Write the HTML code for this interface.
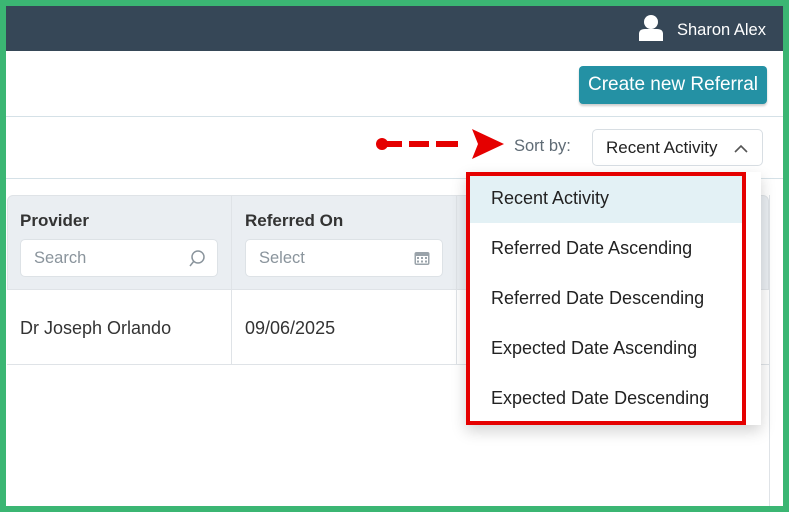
<!DOCTYPE html>
<html><head><style>
*{box-sizing:border-box;margin:0;padding:0}
body{width:789px;height:512px;overflow:hidden;background:#3bb673;font-family:"Liberation Sans",sans-serif;position:relative}
.page{position:absolute;left:6px;top:6px;width:777px;height:500px;background:#fff;overflow:hidden}
.hdr{position:absolute;left:0;top:0;width:777px;height:45px;background:#364757}
.abs{position:absolute}
</style></head><body>
<div class="page">
 <div class="hdr">
  <svg class="abs" style="left:632px;top:8px" width="26" height="28" viewBox="0 0 26 28"><circle cx="13" cy="8" r="7" fill="#fff"/><path d="M1 27 V20 Q1 15 7 15 H19 Q25 15 25 20 V27 Z" fill="#fff"/></svg>
  <div class="abs" style="left:671px;top:15px;color:#fff;font-size:16.5px">Sharon Alex</div>
 </div>
 <div class="abs" style="left:573px;top:60px;width:188px;height:38px;background:#2491a4;border-radius:4px;box-shadow:0 2px 2px rgba(0,0,0,.2);color:#fff;font-size:19px;line-height:38px;text-align:center">Create new Referral</div>
 <div class="abs" style="left:0;top:110px;width:777px;height:1px;background:#d5e1e7"></div>
 <div class="abs" style="left:0;top:172px;width:777px;height:1px;background:#d5e1e7"></div>
 <svg class="abs" style="left:368px;top:123px" width="130" height="34"><circle cx="8" cy="15" r="6" fill="#e50000"/><rect x="8" y="12" width="20" height="6" fill="#e50000"/><rect x="35" y="12" width="20" height="6" fill="#e50000"/><rect x="62" y="12" width="22" height="6" fill="#e50000"/><polygon points="98,0 130,15 98,30 104,15" fill="#e50000"/></svg>
 <div class="abs" style="left:508px;top:131px;color:#5f6b75;font-size:16.5px">Sort by:</div>
 <div class="abs" style="left:586px;top:123px;width:171px;height:37px;border:1px solid #d8dee3;border-radius:5px;font-size:17px;line-height:35px;padding-left:13px;color:#222">Recent Activity
  <svg class="abs" style="left:140px;top:12px" width="16" height="12"><path d="M2 10 L8 4 L14 10" stroke="#555" stroke-width="1.6" fill="none"/></svg></div>
 <div class="abs" style="left:1px;top:189px;width:762px;height:95px;background:#eaeef2;border:1px solid #dfe3e7;border-radius:6px 6px 0 0"></div>
 <div class="abs" style="left:225px;top:189px;width:1px;height:170px;background:#dfe3e7"></div>
 <div class="abs" style="left:450px;top:189px;width:1px;height:170px;background:#dfe3e7"></div>
 <div class="abs" style="left:763px;top:189px;width:1px;height:320px;background:#dfe3e7"></div>
 <div class="abs" style="left:1px;top:358px;width:762px;height:1px;background:#dfe3e7"></div>
 <div class="abs" style="left:14px;top:205px;font-size:17px;color:#333;font-weight:600">Provider</div>
 <div class="abs" style="left:239px;top:205px;font-size:17px;color:#333;font-weight:600">Referred On</div>
 <div class="abs" style="left:14px;top:233px;width:198px;height:38px;background:#fff;border:1px solid #dde2e6;border-radius:5px;font-size:16.5px;line-height:37px;padding-left:13px;color:#8a949c">Search
  <svg class="abs" style="left:166px;top:9px" width="20" height="20"><circle cx="11" cy="8" r="6" stroke="#8a949c" stroke-width="1.5" fill="none"/><path d="M7 12 L3 17" stroke="#8a949c" stroke-width="1.5"/></svg></div>
 <div class="abs" style="left:239px;top:233px;width:198px;height:38px;background:#fff;border:1px solid #dde2e6;border-radius:5px;font-size:16.5px;line-height:37px;padding-left:13px;color:#8a949c">Select
  <svg class="abs" style="left:168px;top:10px" width="16" height="16"><rect x="0.5" y="2" width="15" height="13" rx="2" fill="#9aa3aa"/><rect x="2" y="6" width="12" height="7.5" fill="#fff"/><g fill="#9aa3aa"><rect x="3" y="7" width="2" height="2"/><rect x="7" y="7" width="2" height="2"/><rect x="11" y="7" width="2" height="2"/><rect x="3" y="10.5" width="2" height="2"/><rect x="7" y="10.5" width="2" height="2"/><rect x="11" y="10.5" width="2" height="2"/></g></svg></div>
 <div class="abs" style="left:14px;top:312px;font-size:18px;color:#333">Dr Joseph Orlando</div>
 <div class="abs" style="left:239px;top:312px;font-size:18px;color:#333">09/06/2025</div>
 <div class="abs" style="left:460px;top:166px;width:295px;height:253px;background:#fff;box-shadow:0 6px 14px rgba(0,0,0,.18)"></div>
 <div class="abs" style="left:464px;top:169px;width:275px;height:48px;background:#e3f1f5"></div>
 <div class="abs" style="left:460px;top:166px;width:280px;height:253px;border:4px solid #e50000"></div>
 <div class="abs" style="left:485px;top:182px;font-size:18px;color:#222;line-height:20px">Recent Activity</div>
 <div class="abs" style="left:485px;top:232px;font-size:18px;color:#222;line-height:20px">Referred Date Ascending</div>
 <div class="abs" style="left:485px;top:282px;font-size:18px;color:#222;line-height:20px">Referred Date Descending</div>
 <div class="abs" style="left:485px;top:332px;font-size:18px;color:#222;line-height:20px">Expected Date Ascending</div>
 <div class="abs" style="left:485px;top:382px;font-size:18px;color:#222;line-height:20px">Expected Date Descending</div>
</div>
</body></html>
